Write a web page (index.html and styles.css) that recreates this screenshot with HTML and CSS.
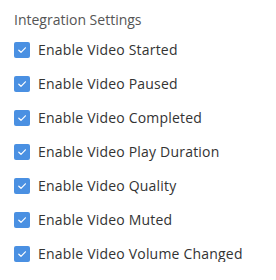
FILE: index.html
```html
<!DOCTYPE html>
<html>
<head>
<meta charset="utf-8">
<link rel="stylesheet" href="styles.css">
</head>
<body>
<div class="panel">
  <div class="title">Integration Settings</div>
  <ul class="list">
    <li class="item"><span class="box"><svg viewBox="0 0 16 16" width="16" height="16"><path d="M4.8 8.2l2.2 2.1 4.4-4.5" fill="none" stroke="#fff" stroke-width="1.2" stroke-linecap="round" stroke-linejoin="round"/></svg></span><span class="label">Enable Video Started</span></li>
    <li class="item"><span class="box"><svg viewBox="0 0 16 16" width="16" height="16"><path d="M4.8 8.2l2.2 2.1 4.4-4.5" fill="none" stroke="#fff" stroke-width="1.2" stroke-linecap="round" stroke-linejoin="round"/></svg></span><span class="label">Enable Video Paused</span></li>
    <li class="item"><span class="box"><svg viewBox="0 0 16 16" width="16" height="16"><path d="M4.8 8.2l2.2 2.1 4.4-4.5" fill="none" stroke="#fff" stroke-width="1.2" stroke-linecap="round" stroke-linejoin="round"/></svg></span><span class="label">Enable Video Completed</span></li>
    <li class="item"><span class="box"><svg viewBox="0 0 16 16" width="16" height="16"><path d="M4.8 8.2l2.2 2.1 4.4-4.5" fill="none" stroke="#fff" stroke-width="1.2" stroke-linecap="round" stroke-linejoin="round"/></svg></span><span class="label">Enable Video Play Duration</span></li>
    <li class="item"><span class="box"><svg viewBox="0 0 16 16" width="16" height="16"><path d="M4.8 8.2l2.2 2.1 4.4-4.5" fill="none" stroke="#fff" stroke-width="1.2" stroke-linecap="round" stroke-linejoin="round"/></svg></span><span class="label">Enable Video Quality</span></li>
    <li class="item"><span class="box"><svg viewBox="0 0 16 16" width="16" height="16"><path d="M4.8 8.2l2.2 2.1 4.4-4.5" fill="none" stroke="#fff" stroke-width="1.2" stroke-linecap="round" stroke-linejoin="round"/></svg></span><span class="label">Enable Video Muted</span></li>
    <li class="item"><span class="box"><svg viewBox="0 0 16 16" width="16" height="16"><path d="M4.8 8.2l2.2 2.1 4.4-4.5" fill="none" stroke="#fff" stroke-width="1.2" stroke-linecap="round" stroke-linejoin="round"/></svg></span><span class="label">Enable Video Volume Changed</span></li>
  </ul>
</div>
</body>
</html>
```
FILE: styles.css
```css
html, body {
  margin: 0;
  padding: 0;
  background: #fff;
}
.panel {
  padding: 11px 14px 0 14px;
  font-family: "Open Sans", "Liberation Sans", sans-serif;
}
.title {
  font-size: 14px;
  line-height: 18px;
  color: #555;
}
.list {
  list-style: none;
  margin: 13px 0 0 0;
  padding: 0;
  display: flex;
  flex-direction: column;
  gap: 18px;
}
.item {
  display: flex;
  align-items: center;
  height: 16px;
}
.box {
  width: 16px;
  height: 16px;
  border-radius: 2px;
  background: #4a90e2;
  display: flex;
  flex: none;
}
.label {
  margin-left: 8px;
  font-size: 14px;
  letter-spacing: 0.2px;
  color: #333;
  line-height: 16px;
}
```
